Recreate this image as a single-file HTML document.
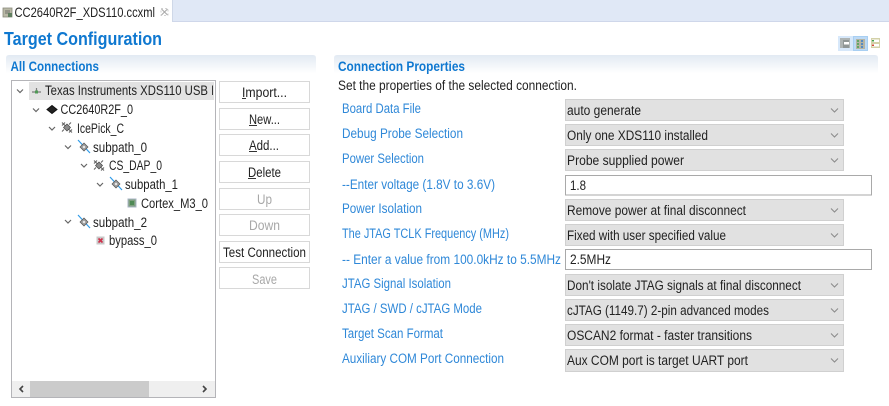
<!DOCTYPE html>
<html>
<head>
<meta charset="utf-8">
<style>
html,body{margin:0;padding:0;background:#fff;width:889px;height:406px;overflow:hidden}
svg{display:block;filter:blur(.25px)}
text{font-family:"Liberation Sans",sans-serif;font-size:13.5px;fill:#222}
.l{fill:#2f88d8}
.d{fill:#a8a8a8}
.h{font-weight:bold;fill:#0f78d0}
.b{fill:none;stroke:#d6d6d6;stroke-width:1}
.bd{fill:#fff;stroke:#d8d8d8;stroke-width:1}
.s{fill:#e1e1e1;stroke:#d0d0d0;stroke-width:1}
.i{fill:#fff;stroke:#a9a9a9;stroke-width:1}
.c{fill:none;stroke:#666;stroke-width:1.2}
.cs{fill:none;stroke:#8a8a8a;stroke-width:1}
</style>
</head>
<body>
<svg width="889" height="406" viewBox="0 0 889 406" xmlns="http://www.w3.org/2000/svg">
<defs>
<linearGradient id="g" x1="0" y1="0" x2="0" y2="1"><stop offset="0" stop-color="#e2eaf3"/><stop offset="1" stop-color="#ffffff"/></linearGradient>
<clipPath id="tc"><rect x="29" y="82" width="184" height="18"/></clipPath>
<g id="sub">
<path d="M-6,-7 L6,6" stroke="#2f9be8" stroke-width="1.2" fill="none"/>
<path d="M-4,0 L0,-4 L4,0 L0,4 Z" fill="#9a9a9a" stroke="#555" stroke-width=".7"/>
<path d="M-1.5,0 L0,-1.5 L1.5,0 L0,1.5 Z" fill="#eee"/>
</g>
<g id="pick">
<path d="M-5,-5 L5,5 M-2,-5 L-5,-2 M5,2 L2,5 M2,-3 L4,-5 M-3,2 L-5,4" stroke="#666" stroke-width="1.1" fill="none"/>
<path d="M-3.5,0 L0,-3.5 L3.5,0 L0,3.5 Z" fill="#8c8c8c" stroke="#444" stroke-width=".7"/>
</g>
</defs>

<!-- tab bar -->
<rect x="172" y="0" width="717" height="22" fill="#e0e8f6"/>
<rect x="172" y="0" width="1" height="22" fill="#cfd8e8"/>
<rect x="173" y="21" width="716" height="1" fill="#cfd7ea"/>
<rect x="3" y="8" width="9" height="9" fill="#b9b9a6" stroke="#8a8a7c" stroke-width=".8"/>
<path d="M5,11 H10 M5,13 H10" stroke="#555" stroke-width=".8"/>
<rect x="8" y="13" width="4" height="4" fill="#5f7f5f"/>
<text x="14.5" y="17" textLength="140.5" lengthAdjust="spacingAndGlyphs" style="font-size:14px">CC2640R2F_XDS110.ccxml</text>
<path d="M161.5,9 L167.5,15 M167.5,9 L161.5,15" stroke="#aaa" stroke-width="1.1"/>
<rect x="161" y="8.5" width="7" height="7" fill="none" stroke="#c4c4c4" stroke-width=".8" stroke-dasharray="2 2"/>

<!-- title -->
<text class="h" x="4" y="45" textLength="158" lengthAdjust="spacingAndGlyphs" style="font-size:18px">Target Configuration</text>

<!-- toolbar -->
<rect x="838" y="36" width="15" height="15" fill="#d7e8fa"/>
<rect x="853" y="36" width="15" height="15" fill="#bddaf6"/>
<rect x="853.5" y="36.5" width="14" height="14" fill="none" stroke="#a8cff2"/>
<rect x="840" y="38" width="10" height="10" fill="#aeb4b4"/>
<rect x="843" y="40" width="6" height="8" fill="#8f9696"/>
<rect x="844" y="42" width="5" height="2.500" fill="#fff"/>
<rect x="856" y="39" width="9" height="10" fill="#b5b5a5"/>
<path d="M858,40 V48" stroke="#3fa04a" stroke-width="1.4" stroke-dasharray="2 1"/>
<path d="M862,40 V48" stroke="#2f78d0" stroke-width="1.4" stroke-dasharray="2 1"/>
<rect x="871" y="38" width="9" height="10" fill="#d3d1a8"/>
<rect x="872" y="39.5" width="7" height="2.5" fill="#fff"/>
<rect x="872" y="44" width="7" height="2.5" fill="#fff"/>
<rect x="872" y="40" width="2" height="1.5" fill="#3fa04a"/>
<rect x="872" y="44.5" width="2" height="1.5" fill="#d04a3a"/>

<!-- section headers -->
<path d="M6,73 V58 Q6,55 9,55 H313 Q316,55 316,58 V73 Z" fill="url(#g)"/>
<path d="M334,73 V58 Q334,55 337,55 H875 Q878,55 878,58 V73 Z" fill="url(#g)"/>
<text class="h" x="10.5" y="71" textLength="88.5" lengthAdjust="spacingAndGlyphs">All Connections</text>
<text class="h" x="338" y="71" textLength="127" lengthAdjust="spacingAndGlyphs">Connection Properties</text>
<text x="338" y="90" textLength="239" lengthAdjust="spacingAndGlyphs">Set the properties of the selected connection.</text>

<!-- tree box -->
<rect x="11.5" y="80.5" width="204" height="317" fill="#fff" stroke="#b4b4b8"/>
<rect x="29" y="82" width="185" height="18" fill="#e2e2e2"/>
<rect x="12" y="381" width="203" height="16" fill="#efefef"/>
<rect x="30" y="381" width="119" height="16" fill="#cbcbcb"/>
<path d="M23,386 L20,389 L23,392" fill="none" stroke="#444" stroke-width="1.6"/>
<path d="M203,386 L206,389 L203,392" fill="none" stroke="#444" stroke-width="1.6"/>

<!-- chevrons -->
<path class="c" d="M17,89.5 L20,92.5 L23,89.5"/>
<path class="c" d="M33,108.5 L36,111.5 L39,108.5"/>
<path class="c" d="M49,127 L52,130 L55,127"/>
<path class="c" d="M65,145.5 L68,148.5 L71,145.5"/>
<path class="c" d="M81,164 L84,167 L87,164"/>
<path class="c" d="M97,183 L100,186 L103,183"/>
<path class="c" d="M65,220 L68,223 L71,220"/>

<!-- tree icons -->
<path d="M32,92 H41 M36.5,88 V92" stroke="#7d7d7d" stroke-width="1.2" fill="none"/>
<rect x="35" y="90.5" width="3" height="3" fill="#4f9a55"/>
<path d="M47,109.5 L52,105.5 L57,109.5 L52,113.5 Z" fill="#222" stroke="#111"/>
<use href="#pick" x="67" y="127.5"/>
<use href="#sub" x="84" y="147"/>
<use href="#pick" x="99" y="165.5"/>
<use href="#sub" x="116" y="184"/>
<rect x="128" y="199" width="8" height="8" fill="#7fa07f" stroke="#aab4c4"/>
<rect x="130" y="201" width="4" height="4" fill="#4f8a55"/>
<use href="#sub" x="84" y="222"/>
<rect x="96.500" y="236.500" width="8" height="8" fill="#c8c8c8"/>
<path d="M98.500,238.500 L102.500,242.500 M102.500,238.500 L98.500,242.500" stroke="#d0304a" stroke-width="1.6"/>

<!-- tree text -->
<g clip-path="url(#tc)">
<text x="45" y="95" textLength="163" lengthAdjust="spacingAndGlyphs">Texas Instruments XDS110 USB</text>
<text x="211" y="95">D</text>
</g>
<text x="60.5" y="114" textLength="72.5" lengthAdjust="spacingAndGlyphs">CC2640R2F_0</text>
<text x="77" y="133" textLength="47" lengthAdjust="spacingAndGlyphs">IcePick_C</text>
<text x="93" y="152" textLength="54" lengthAdjust="spacingAndGlyphs">subpath_0</text>
<text x="109" y="170" textLength="53" lengthAdjust="spacingAndGlyphs">CS_DAP_0</text>
<text x="125" y="189" textLength="53" lengthAdjust="spacingAndGlyphs">subpath_1</text>
<text x="141" y="208" textLength="67" lengthAdjust="spacingAndGlyphs">Cortex_M3_0</text>
<text x="93" y="227" textLength="54" lengthAdjust="spacingAndGlyphs">subpath_2</text>
<text x="109" y="245" textLength="48" lengthAdjust="spacingAndGlyphs">bypass_0</text>

<!-- buttons -->
<rect class="bd" x="219.500" y="81.500" width="90" height="21"/>
<rect class="bd" x="219.500" y="108.500" width="90" height="21"/>
<rect class="bd" x="219.500" y="134.500" width="90" height="21"/>
<rect class="bd" x="219.500" y="161.500" width="90" height="21"/>
<rect class="bd" x="219.500" y="188.500" width="90" height="21"/>
<rect class="bd" x="219.500" y="214.500" width="90" height="21"/>
<rect class="bd" x="219.500" y="241.500" width="90" height="21"/>
<rect class="bd" x="219.500" y="267.500" width="90" height="21"/>
<text x="242" y="97" textLength="45" lengthAdjust="spacingAndGlyphs">Import...</text>
<text x="249" y="124" textLength="31" lengthAdjust="spacingAndGlyphs">New...</text>
<text x="249" y="150" textLength="30" lengthAdjust="spacingAndGlyphs">Add...</text>
<text x="248" y="177" textLength="33" lengthAdjust="spacingAndGlyphs">Delete</text>
<text class="d" x="257" y="204" textLength="15" lengthAdjust="spacingAndGlyphs">Up</text>
<text class="d" x="249" y="230" textLength="31" lengthAdjust="spacingAndGlyphs">Down</text>
<text x="223" y="257" textLength="83" lengthAdjust="spacingAndGlyphs">Test Connection</text>
<text class="d" x="252" y="284" textLength="25" lengthAdjust="spacingAndGlyphs">Save</text>
<path d="M242,98.500 H246 M249,125.500 H257 M249,151.500 H257 M248,178.500 H256" stroke="#333" stroke-width="1"/>

<!-- labels -->
<text class="l" x="342" y="113" textLength="79" lengthAdjust="spacingAndGlyphs">Board Data File</text>
<text class="l" x="342" y="138" textLength="121" lengthAdjust="spacingAndGlyphs">Debug Probe Selection</text>
<text class="l" x="342" y="163" textLength="82" lengthAdjust="spacingAndGlyphs">Power Selection</text>
<text class="l" x="342" y="189" textLength="153" lengthAdjust="spacingAndGlyphs">--Enter voltage (1.8V to 3.6V)</text>
<text class="l" x="342" y="213" textLength="80" lengthAdjust="spacingAndGlyphs">Power Isolation</text>
<text class="l" x="342" y="238" textLength="167" lengthAdjust="spacingAndGlyphs">The JTAG TCLK Frequency (MHz)</text>
<text class="l" x="342" y="264" textLength="219" lengthAdjust="spacingAndGlyphs">-- Enter a value from 100.0kHz to 5.5MHz</text>
<text class="l" x="342" y="288" textLength="109" lengthAdjust="spacingAndGlyphs">JTAG Signal Isolation</text>
<text class="l" x="342" y="313" textLength="140" lengthAdjust="spacingAndGlyphs">JTAG / SWD / cJTAG Mode</text>
<text class="l" x="342" y="338" textLength="101" lengthAdjust="spacingAndGlyphs">Target Scan Format</text>
<text class="l" x="342" y="363" textLength="162" lengthAdjust="spacingAndGlyphs">Auxiliary COM Port Connection</text>

<!-- selects -->
<rect class="s" x="565.500" y="99.500" width="278" height="21"/>
<rect class="s" x="565.500" y="124.500" width="278" height="21"/>
<rect class="s" x="565.500" y="149.500" width="278" height="21"/>
<rect class="i" x="565.500" y="175.500" width="306" height="19.500"/>
<rect class="s" x="565.500" y="199.500" width="278" height="21"/>
<rect class="s" x="565.500" y="224.500" width="278" height="21"/>
<rect class="i" x="565.500" y="249.500" width="306" height="20"/>
<rect class="s" x="565.500" y="274.500" width="278" height="21"/>
<rect class="s" x="565.500" y="299.500" width="278" height="21"/>
<rect class="s" x="565.500" y="324.500" width="278" height="21"/>
<rect class="s" x="565.500" y="349.500" width="278" height="22"/>

<text x="567" y="115" textLength="74" lengthAdjust="spacingAndGlyphs">auto generate</text>
<text x="567" y="140" textLength="141" lengthAdjust="spacingAndGlyphs">Only one XDS110 installed</text>
<text x="567" y="165" textLength="117" lengthAdjust="spacingAndGlyphs">Probe supplied power</text>
<text x="570" y="190" textLength="16" lengthAdjust="spacingAndGlyphs">1.8</text>
<text x="567" y="215" textLength="179" lengthAdjust="spacingAndGlyphs">Remove power at final disconnect</text>
<text x="567" y="240" textLength="159" lengthAdjust="spacingAndGlyphs">Fixed with user specified value</text>
<text x="570" y="264" textLength="41" lengthAdjust="spacingAndGlyphs">2.5MHz</text>
<text x="567" y="290" textLength="234" lengthAdjust="spacingAndGlyphs">Don't isolate JTAG signals at final disconnect</text>
<text x="567" y="315" textLength="202" lengthAdjust="spacingAndGlyphs">cJTAG (1149.7) 2-pin advanced modes</text>
<text x="567" y="340" textLength="185" lengthAdjust="spacingAndGlyphs">OSCAN2 format - faster transitions</text>
<text x="567" y="365" textLength="181" lengthAdjust="spacingAndGlyphs">Aux COM port is target UART port</text>

<!-- select chevrons -->
<path class="cs" d="M831,108.500 L834.500,112 L838,108.500"/>
<path class="cs" d="M831,133.500 L834.500,137 L838,133.500"/>
<path class="cs" d="M831,158.500 L834.500,162 L838,158.500"/>
<path class="cs" d="M831,208.500 L834.500,212 L838,208.500"/>
<path class="cs" d="M831,233.500 L834.500,237 L838,233.500"/>
<path class="cs" d="M831,283.500 L834.500,287 L838,283.500"/>
<path class="cs" d="M831,308.500 L834.500,312 L838,308.500"/>
<path class="cs" d="M831,333.500 L834.500,337 L838,333.500"/>
<path class="cs" d="M831,358.500 L834.500,362 L838,358.500"/>
</svg>
</body>
</html>
